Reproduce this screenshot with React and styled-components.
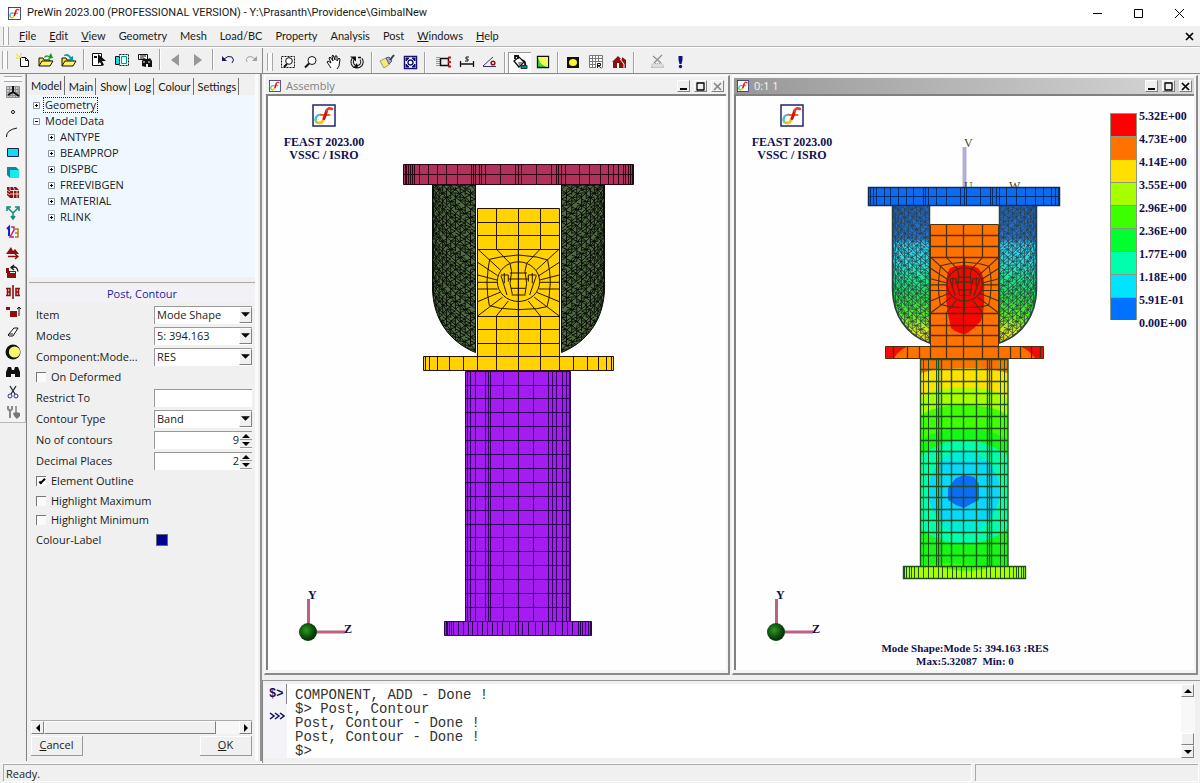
import React from "react";
import styled, { createGlobalStyle, css } from "styled-components";

const Global = createGlobalStyle`
  *, *::before, *::after { box-sizing: border-box; }
  body { margin: 0; background: #f0f0f0; color: #1a1a1a; font: 11px/16px "Open Sans", "Noto Sans", sans-serif; }
  button, input, select { font: inherit; color: inherit; margin: 0; padding: 0; border: 0; border-radius: 0; background: none; }
  u { text-underline-offset: 1px; }
`;

const raised = css`
  background: #f0f0f0;
  border: 1px solid;
  border-color: #fff #808080 #808080 #fff;
`;

const chrome = css`font-family: Lato, "Open Sans", sans-serif; font-size: 11px;`;

/* ---------- frame ---------- */
const Page = styled.div`display: flex; flex-direction: column; min-height: 100vh;`;
const TitleBar = styled.header`
  display: flex; align-items: center; height: 26px; padding-left: 8px; gap: 6px; background: #fff;
`;
const AppTitle = styled.h1`margin: 0; flex: 1; font: 400 11px/16px Roboto, "Open Sans", sans-serif; white-space: nowrap;`;
const SysButtons = styled.span`display: flex;`;
const SysButton = styled.button`width: 41px; height: 26px; display: grid; place-items: center;`;
const MenuBar = styled.nav`
  display: flex; align-items: center; height: 21px; padding: 0 6px 0 3px;
  border-bottom: 1px solid #b4b4b4; background: #f0f0f0; ${chrome}
`;
const MenuItem = styled.button`padding: 0 6px 0 7px; white-space: nowrap;`;
const Fill = styled.span`flex: 1;`;
const Grip = styled.span`
  flex: none;
  width: ${(p) => (p.$flat ? "18px" : "6px")};
  height: ${(p) => (p.$flat ? "6px" : "18px")};
  border: solid #a8a8a8;
  border-width: ${(p) => (p.$flat ? "1px 0" : "0 1px")};
  background: #fafafa;
`;
const Toolbars = styled.div`
  display: flex; height: 27px; border-top: 1px solid #fff; border-bottom: 1px solid #8a8a8a;
`;
const Toolbar = styled.div`
  display: flex; align-items: center;
  flex: ${(p) => (p.$grow ? 1 : "none")};
  padding: ${(p) => (p.$grow ? "3px 0 0 4px" : "0 0 2px 2px")};
  border-left: ${(p) => (p.$grow ? "1px solid #8a8a8a" : "0")};
`;
const ToolButton = styled.button`
  flex: none; width: 23px; height: ${(p) => (p.$tall ? "20px" : "21px")};
  display: grid; place-items: center;
  ${(p) => p.$on && css`background: #fafafa; box-shadow: inset 1px 1px #999, inset -1px -1px #fff;`}
`;
const Sep = styled.span`
  flex: none; width: 7px; height: 21px; margin-right: ${(p) => p.$after || 0}px;
  &::before { content: ""; display: block; width: 2px; height: 100%; margin-left: 3px; border-left: 1px solid #a0a0a0; background: #fff; }
`;
const Pad = styled.span`flex: none; width: 3px;`;

const Work = styled.div`flex: 1; display: flex;`;
const Rail = styled.div`
  align-self: flex-start; width: 26px; padding: 2px 0 0 1px;
  display: flex; flex-direction: column; align-items: center;
  border-right: 1px solid #b8b8b8; border-bottom: 1px solid #b8b8b8; background: #f3f3f3;
`;

/* ---------- side panel ---------- */
const Side = styled.aside`
  width: 236px; flex: none; display: flex; flex-direction: column;
  border-left: 1px solid #808080; border-right: 2px solid #909090; margin-bottom: 2px;
`;
const SideInner = styled.div`
  flex: 1; display: flex; flex-direction: column; border-right: 3px solid #fbfbfb; padding: 0 0 5px 2px; margin-right: 2px;
`;
const Tabs = styled.div`display: flex; align-items: flex-end; height: 21px; padding-top: 2px; ${chrome}`;
const Tab = styled.button`
  height: ${(p) => (p.$active ? "19px" : "17px")};
  padding: 0 2px 0 ${(p) => (p.$active ? "2px" : "4px")};
  border-right: 1px solid #707070;
`;
const Tree = styled.ul`
  margin: 0; padding: 2px 0 0 3px; height: 182px; list-style: none; background: #f0f8ff;
`;
const Node = styled.li`
  display: flex; align-items: center; gap: 4px; height: 16px; padding-left: ${(p) => (p.$depth ? 16 : 1)}px;
`;
const Label = styled.span`
  padding: 0 1px; line-height: 14px; outline: ${(p) => (p.$focus ? "1px dotted #222" : "0")};
`;
const Expander = styled.button`width: 7px; height: 7px; display: grid;`;
const Form = styled.form`
  margin-top: 5px; border-top: 1px solid #a8a8a8; flex: 1; display: flex; flex-direction: column;
`;
const FormTitle = styled.h2`
  margin: 3px 0 2px; background: #f1f1f6; color: #1c1ca8; font-size: 11px; line-height: 16px; font-weight: 400; text-align: center;
`;
const Row = styled.div`
  display: grid; grid-template-columns: 118px 98px; align-items: center; height: 21px; padding-left: 7px; white-space: nowrap;
`;
const CheckRow = styled.label`
  display: flex; align-items: center; gap: 5px; height: ${(p) => (p.$tight ? 19 : 20)}px; padding-left: 7px;
`;
const Check = styled.input`
  appearance: none; width: 10px; height: 10px; background: #fafafa;
  border: solid #777; border-width: 1px 0 0 1px; display: grid; place-items: center;
  &:checked::before { content: ""; width: 7px; height: 3px; border: solid #000; border-width: 0 0 2px 2px; transform: rotate(-45deg) translate(1px, 0); }
`;
const Field = styled.span`
  display: grid; height: 18px; background: #fff; border: solid #999; border-width: 1px 0 0 1px;
  > * { grid-area: 1 / 1; min-width: 0; }
`;
const Select = styled.select`appearance: none; padding-left: 2px; width: 100%; height: 16px; outline: 0;`;
const Text = styled.input`
  width: 100%; height: 16px; outline: 0; text-align: right; padding-right: 13px;
`;
const Arrow = styled.span`
  justify-self: end; width: 13px; height: 16px; display: grid; place-items: center; pointer-events: none; ${raised}
`;
const Spin = styled.span`justify-self: end; display: grid; width: 12px;`;
const SpinButton = styled.button`height: 8px; display: grid; place-items: center; background: #f0f0f0; border-bottom: 1px solid #999;`;
const Swatch = styled.input`
  appearance: none; width: 12px; height: 12px; margin-left: 2px; border: 1px solid #667;
  &::-webkit-color-swatch-wrapper { padding: 0; }
  &::-webkit-color-swatch { border: 0; }
`;
const HScroll = styled.div`display: flex; height: 14px; margin: 0 3px 0 2px; border-top: 1px solid #aaa; background: #f7f7f7;`;
const ScrollButton = styled.button`width: 13px; height: 13px; flex: none; display: grid; place-items: center; ${raised}`;
const HThumb = styled.span`width: 172px; ${raised}`;
const Actions = styled.div`display: flex; justify-content: space-between; margin: 2px 3px 0 2px;`;
const Push = styled.button`width: 52px; height: 20px; padding-bottom: 2px; border: solid #999; border-width: 0 1px 1px 0; box-shadow: inset 1px 1px #fff;`;

/* ---------- documents ---------- */
const Main = styled.main`flex: 1; min-width: 0; display: flex; flex-direction: column;`;
const Mdi = styled.section`flex: 1; display: flex; gap: 2px; padding: 1px 2px 0;`;
const Win = styled.article`
  flex: 1; min-width: 0; display: flex; flex-direction: column; padding: 2px 2px 3px 1px;
  border: solid; border-width: 1px 2px 2px 1px; border-color: #fff #8a8a8a #8a8a8a #fff; background: #f4f4f4;
`;
const WinTitle = styled.header`
  display: flex; align-items: center; gap: 5px; height: 16px; padding: 0 2px 0 3px;
  color: ${(p) => (p.$active ? "#f4f4f4" : "#808080")};
  background: ${(p) => (p.$active ? "linear-gradient(90deg, #989898, #d6d6d6)" : "#f0f0f0")};
`;
const WinName = styled.h3`margin: 0; flex: 1; font-size: 11px; line-height: 16px; font-weight: 400;`;
const WinButtons = styled.span`display: flex; gap: 4px;`;
const WinButton = styled.button`width: 13px; height: 12px; display: grid; place-items: center; ${raised}`;
const Viewport = styled.div`
  position: relative; flex: 1; min-height: 574px; background: #fefefe; border: solid #808080; border-width: 2px 0 0 2px;
  color: #10104e; font: bold 12px/13px "Liberation Serif", serif; text-align: center;
`;
const Scene = styled.svg`position: absolute; inset: 0; width: 100%; height: 100%;`;
const Brand = styled.div`position: absolute; left: 0; top: 8px; width: 112px;`;
const BrandText = styled.p`margin: 6px 0 0;`;
const Caption = styled.p`position: absolute; left: 0; right: 0; bottom: 2px; margin: 0; white-space: pre; font-size: 11px;`;
const Legend = styled.ol`
  position: absolute; top: 14px; right: 6px; width: 78px; margin: 0; padding: 0; list-style: none; text-align: left;
`;
const Step = styled.li`
  display: flex; gap: 2px; height: 23px;
  &::before { content: ""; width: 27px; height: 23px; margin-top: 3px; background: ${(p) => p.$c}; border: 1px solid ${(p) => (p.$c === "none" ? "transparent" : "#8a9a80")}; border-bottom: 0; }
`;

/* ---------- console and status ---------- */
const Console = styled.section`
  display: flex; height: 83px; margin-top: 5px; padding: 3px 5px 5px 1px;
  border: solid #999; border-width: 1px 0 0 1px; border-left-color: #888;
`;
const Gutter = styled.div`
  width: 23px; padding-left: 5px; color: #101058; font: bold 12px/20px "Liberation Mono", monospace; background: #f3f3f8;
`;
const Prompt = styled.span`display: block; border-right: 1px solid #808090; height: 20px;`;
const More = styled.span`display: flex; align-items: center; height: 24px;`;
const Output = styled.pre`
  flex: 1; margin: 0; padding: 4px 8px 0; background: #fff; color: #333; font: 14px/14px "Liberation Mono", monospace;
`;
const VScroll = styled.div`width: 14px; display: flex; flex-direction: column; background: #f8f8f8;`;
const VThumb = styled.span`height: 12px; margin-right: 1px; ${raised}`;
const Status = styled.footer`
  display: flex; gap: 4px; height: 20px; padding: 0 2px 2px 3px; border-top: 1px solid #fafafa;
`;
const Cell = styled.span`
  ${(p) => (p.$w ? `width: ${p.$w}px;` : "flex: 1;")}
  padding-left: 2px; border: solid #aaa; border-width: 1px 0 0 1px; line-height: 17px; box-shadow: 1px 1px #fff;
`;

/* ---------- drawings ---------- */
const Tri = ({ d = "down", w = 8 }) => (
  <svg width={w} height={w} viewBox="0 0 8 8">
    <path d={{ down: "M0 2h8L4 6z", up: "M0 6h8L4 2z", left: "M6 0v8L2 4z", right: "M2 0v8l4-4z" }[d]} />
  </svg>
);

const LogoArt = styled.svg`flex: none;`;
function Logo({ w, h }) {
  return (
    <LogoArt width={w} height={h} viewBox="0 0 24 23" preserveAspectRatio="none">
      <rect x="1" y="1" width="22" height="21" fill="#fff" stroke="#23236e" strokeWidth="1.500" />
      <g fill="none" strokeLinecap="round" strokeWidth="3">
        <path d="M3.500 16q0-5 5-5.500" stroke="#38b8f0" strokeWidth="2.200" />
        <path d="M7.500 18.800q-4 .500-4-3" stroke="#70d840" strokeWidth="2.200" />
        <path d="M11.500 15q-1 3.500-4 4" stroke="#f5c820" />
        <path d="M9 11h8.500" stroke="#f06a10" strokeWidth="2" />
        <path d="M14.500 7q-1 4-2.500 7.500" stroke="#d01010" />
        <path d="M20 5q-4-2-5.500 2" stroke="#f03a20" strokeWidth="2.600" />
      </g>
    </LogoArt>
  );
}

const K = "#111";
const R = "#8c1010";
const ICONS = {
  new: <><path d="M5.500 5.500h5l3 3v6h-8z" fill="#fff" stroke={K} /><path d="M10.500 5.500v3h3" fill="none" stroke={K} /><path d="M1 2l5 4M6 1v5M1 6h4" stroke="#e8e020" /></>,
  open: <><path d="M1 14V6h4l1 2h6v2" fill="#f0e840" stroke={K} /><path d="M1 14l3-5h11l-3 5z" fill="#fbf264" stroke={K} /><path d="M6 5q2-3 5-1l2-3 2 5-5 1 1-2q-3-1-4 1z" fill="#159a20" /></>,
  save: <><path d="M1 14V6h4l1 2h6v2" fill="#f0e840" stroke={K} /><path d="M1 14l3-5h11l-3 5z" fill="#fbf264" stroke={K} /><path d="M3 3q4-3 7 2l2-1v5L7 8l2-1Q7 3 3 4z" fill="#089aa0" /></>,
  pick: <><path d="M1.500 1.500h9v12h-9z" fill="#fff" stroke={K} /><path d="M3 4h3v2H3z" fill={K} /><path d="M7 2v10l2-2 2 4 2-1-2-4h4z" fill={K} /></>,
  boxsel: <><path d="M1.500 4.500h4v8h-4z" fill="#20d8e8" stroke={K} /><path d="M5.500 2.500h9v11h-9z" fill="#e8ffff" stroke={K} strokeDasharray="2 1" /><path d="M7.500 4.500h5v7h-5z" fill="none" stroke="#098" /></>,
  bino: <><path d="M1.500 2.500h9v5h-9z" fill="#fff" stroke={K} /><path d="M3 4h6M3 6h4" stroke={K} /><path d="M5 14V9l2-3 2 1h2l2-1 2 3v6h-4v-3h-2v3z" fill={K} /><path d="M7 9v2M12 9v2" stroke="#fff" /></>,
  left: <path d="M12 2v12L4 8z" fill="#989898" />,
  right: <path d="M4 2v12l8-6z" fill="#989898" />,
  undo: <><path d="M4 7q4-4 8-2 3 3 0 6" fill="none" stroke="#151560" /><path d="M2 4v5h5z" fill="#151560" /></>,
  redo: <><path d="M12 7Q8 3 5 5q-3 2-1 5" fill="none" stroke="#a0a0a0" /><path d="M14 4v5H9z" fill="#a0a0a0" /></>,
  zoomwin: <><path d="M1.500 2.500h13v11h-13z" fill="none" stroke={K} strokeDasharray="2 1" /><circle cx="9" cy="7" r="3.300" fill="#fff" stroke={K} /><path d="M7 10l-3 3" stroke={K} strokeWidth="2" /></>,
  zoom: <><circle cx="9" cy="6.500" r="4" fill="#fff" stroke={K} /><path d="M6 9.500l-4 4" stroke={K} strokeWidth="2" /></>,
  hand: <path d="M5 14L1 8l1-1 3 2L3 4l1-1 3 4L6 2l1-1 2 5V2l2 0 0 5 2-3 1 1-1 7-2 3" fill="#fff" stroke={K} />,
  rotate: <><path d="M4 5Q2 9 5 12q4 2 7-1 2-3 0-6" fill="none" stroke={K} strokeWidth="3.400" /><path d="M4 5Q2 9 5 12q4 2 7-1 2-3 0-6" fill="none" stroke="#e4e4e4" strokeWidth="1.400" /><path d="M1 2.500h6v5zM9 14h-5l4-5z" fill={K} /><path d="M9 3.500h3" stroke={K} strokeWidth="1.500" /></>,
  brush: <><path d="M1 7l6-3 4 6-6 4z" fill="#f4ec70" stroke="#998" /><path d="M7 4l3-1 3 4-3 3z" fill="#aaa8d8" stroke="#557" /><path d="M11 6l4-5" stroke="#335" strokeWidth="2" /></>,
  fit: <><path d="M2.500 2.500h12v12h-12z" fill="#fff" stroke="#151570" strokeWidth="1.500" /><path d="M4 4h3L4 7zM13 4v3l-3-3zM4 13v-3l3 3zM13 13h-3l3-3z" fill="#151570" stroke="#151570" /><circle cx="8.500" cy="8.500" r="2.500" fill="#fff" stroke="#151570" strokeWidth="1.400" /></>,
  load: <><path d="M4.500 4.500h8v7h-8z" fill="#eee" stroke={K} strokeWidth="1.500" /><path d="M1 3v10M3 3v10" stroke="#3434a0" strokeDasharray="1 1" /><path d="M12 3.500h3M12 8h3M12 12.500h3" stroke="#d01010" strokeWidth="2" /></>,
  dim: <><path d="M1.500 7v6M14.500 7v6M2 10h12" stroke={K} strokeWidth="1.300" /><path d="M10 3H7v2h2v2H6" stroke={K} fill="none" /></>,
  angle: <><path d="M1 12L11 3M1 12.500h13" stroke="#337" fill="none" /><circle cx="11" cy="9" r="2.600" fill={R} /><circle cx="11" cy="9" r="1" fill="#fff" /></>,
  paint: <><path d="M2 7l5-4 5 5-5 5z" fill="#fff" stroke={K} strokeWidth="1.300" /><path d="M3 5V2h3v3M10 6q4 1 3 6" stroke={K} fill="none" strokeWidth="1.800" /><path d="M6 8h5l-4 4z" fill="#888" /><path d="M9 11.500h6v3H9z" fill="#0a8a70" stroke="#134" /></>,
  shade: <><path d="M2.500 2.500h11v11h-11z" fill="#38e030" stroke={K} strokeWidth="1.300" /><path d="M3 3h10v10Q5 12 3 3z" fill="#f4f860" /></>,
  dot: <><path d="M2 3h12v11H2z" fill={K} /><ellipse cx="8" cy="8.500" rx="4" ry="3.500" fill="#f6f630" /></>,
  grid: <><path d="M1.500 1.500h13v12h-13zM1 4.500h14M1 7.500h14M1 10.500h14M4.500 1v13M7.500 1v13M10.500 1v13" fill="#fff" stroke="#777" /><path d="M8 8h6v6H8z" fill="#fff" /><path d="M9.500 14V9.500h3v2h-3l4 2.500" stroke={K} fill="none" /></>,
  home: <><path d="M1 8l6-6 4 4V3l4 3v8H2V8z" fill={R} /><path d="M6 9h2v5H6z" fill="#fff" /><path d="M9 5l4 5v4" stroke="#fff" fill="none" /></>,
  cut2: <><path d="M4 2l8 7M13 1L5 9" stroke="#909090" strokeWidth="1.300" /><path d="M2.500 13.500q0-4 3-4h6q3 0 3 4z" fill="#ddd" stroke="#a0a0a0" strokeDasharray="1 1" /></>,
  bang: <><path d="M6.500 2h4v4l-1 4h-2l-1-4z" fill="#101080" /><circle cx="8.500" cy="12.500" r="1.700" fill="#101080" /></>,
  wp: <><path d="M1.500 2.500h13v11h-13zM1 5.500h14M1 8.500h14M1 11.500h14M4.500 2v12M7.500 2v12M10.500 2v12M13 2v12" fill="#ccc" stroke="#8c8c94" /><path d="M8 2v6l6 4M8 8l-5 3" stroke={K} fill="none" strokeWidth="2" /></>,
  point: <circle cx="8" cy="8" r="1.500" fill="#fff" stroke={K} />,
  curve: <path d="M1.500 13Q1 6 12 4" fill="none" stroke={K} />,
  surf: <path d="M2.500 4.500h11v8h-11z" fill="#12dcf4" stroke="#225" />,
  solid: <><path d="M2 3h9l3 3v8H5L2 11z" fill="#0a8a98" /><path d="M5 6h9v8H5z" fill="#18e8f0" /></>,
  mesh: <><path d="M2 3h9l3 3v8H5L2 11z" fill={R} /><path d="M5 6.500h10M5 10h10M8.500 6v8M12 6v8M2 6l3 2M2 9l3 2M5 3v3M8 3l2 3" stroke="#fff" strokeWidth=".8" /></>,
  coord: <path d="M8 14V9L3 4M8 9l5-5M2 7V3h4M10 3h4v4M6 12l2 3 2-3" fill="none" stroke="#118a78" strokeWidth="1.500" />,
  nums: <><path d="M2 5l2-2v9" fill="none" stroke="#2020c0" strokeWidth="2" /><path d="M6 3h3v3L5 13h4" fill="none" stroke="#c020a0" strokeWidth="1.500" /><path d="M9 5h4v8h-3M10 9h3" fill="none" stroke="#b08010" strokeWidth="1.500" /></>,
  move: <><path d="M1 10l5-7 2 4 2-2 4 5z" fill={R} /><path d="M3 12.500h9M10 10l3 2.500L10 15" stroke={R} fill="none" strokeWidth="1.300" /></>,
  turn: <><path d="M1 4h3v3h7v7H2V9H1z" fill={R} /><path d="M5 8h5v1H5z" fill="#f3f3f3" /><path d="M7 3.500q5-2 6 4M9 1L6 3.500 9 6" fill="none" stroke={K} strokeWidth="1.300" /></>,
  mirror: <path d="M2.500 4v8M1 4.500h4v3.500H3h2v3.500H1M8 1v14M13.500 4v8M15 4.500h-4v3.500h2h-2v3.500h4" fill="none" stroke={R} strokeWidth="1.600" />,
  scale: <><path d="M1 3h4v3H1zM5 7h7v6H5z" fill={R} /><path d="M14 12V3M12 5l2-2 2 2" stroke={K} fill="none" /></>,
  erase: <path d="M3 11l6-7h4l-5 8H4zM4 10h4" fill="#fff" stroke={K} />,
  moon: <><circle cx="8" cy="8" r="7.500" fill={K} /><circle cx="9.500" cy="8" r="5.600" fill="#f8f870" /></>,
  binos: <path d="M1 13V8l2-5h3l1 3h2l1-3h3l2 5v5h-5v-3H6v3z" fill={K} />,
  cut: <><path d="M5 2l5 8M11 2L6 10" stroke="#223" strokeWidth="1.300" /><circle cx="5" cy="12" r="2" fill="none" stroke="#2a2a90" /><circle cx="11" cy="12" r="2" fill="none" stroke="#2a2a90" /></>,
  tools: <><path d="M3 2v3l2 2 2-2V2M5 7v7" stroke="#888" strokeWidth="2" fill="none" /><path d="M11 2v6" stroke="#888" strokeWidth="1.600" /><path d="M8 9l3-1 4 1v3l-3 3-3-3z" fill="#777" /></>,
};
const Icon = ({ n }) => <svg width="16" height="16" viewBox="0 0 16 16" aria-hidden="true">{ICONS[n]}</svg>;
const Tools = ({ names, on, tall }) =>
  names.map((n) => <ToolButton key={n} type="button" aria-label={n} $on={n === on} $tall={tall}><Icon n={n} /></ToolButton>);

/* Grid lines are snapped to pixel centres so that they stay crisp. */
const snap = (v) => Math.floor(v) + 0.5;
const vLines = (xs, y1, y2) => xs.map((x) => `M${snap(x)} ${y1}V${y2}`).join("");
const hLines = (ys, x1, x2) => ys.map((y) => `M${x1} ${snap(y)}H${x2}`).join("");

/* Triangle mesh whose columns get narrower towards the outer wall. */
function triMesh(outer, inner, top, bottom, step) {
  const n = 11;
  const xs = Array.from({ length: n + 1 }, (_, i) => outer + (inner - outer) * Math.pow(i / n, 1.4));
  let d = "";
  const rows = Math.ceil((bottom - top) / step);
  for (let r = 0; r < rows; r += 1) {
    const y = top + r * step;
    for (let i = 0; i < n; i += 1) {
      const flip = (r + i) % 2 === 0;
      const wob = ((r * 7 + i * 5) % 4) * 0.7;
      const next = ((r * 7 + 7 + i * 5) % 4) * 0.7;
      const a = xs[i].toFixed(1);
      const b = xs[i + 1].toFixed(1);
      d += `M${a} ${flip ? y : y + step}L${b} ${(flip ? y + step : y) + wob}`;
      if ((r * 3 + i) % 5 !== 0) d += `M${a} ${y + wob}V${y + step + next}`;
      if ((r + i * 2) % 3 !== 0) d += `M${a} ${y}L${b} ${y + wob}`;
    }
  }
  return d;
}

const hub =
  "M248 282L316 345M248 322L308 362M248 360L306 375M248 402H308M248 440L315 412M248 483L322 427" +
  "M493 282L424 345M493 322L432 362M493 360L434 375M493 402H432M493 440L425 412M493 483L418 427" +
  "M304 282L345 325M436 282L395 325M304 483L340 438M436 483L400 438M248 382H306M434 382H493" +
  "M284 313L316 306L370 300L425 306L458 315L464 350L466 382L462 430L456 455L425 461L370 464L316 460L283 452L278 420L276 382L279 345Z" +
  "M307 380A63 59 0 1 0 434 380A63 59 0 1 0 307 380M370 282V483M345 354H396M340 372H402M348 400H392M350 420H392" +
  "M345 325L350 350L345 385L352 418M395 325L390 350L395 385L390 418M318 360H340V380M400 380V360H424M318 362L336 420M424 362L404 420M328 354V385M412 354V385";

function Triad({ x }) {
  return (
    <g fontFamily="Liberation Serif, serif" fontWeight="bold" fontSize="12" fill="#10104e">
      <path d={`M${x + 0.5} 632V599M${x} 632h37`} stroke="#c06080" strokeWidth="3" fill="none" />
      <circle cx={x} cy="632" r="9" fill="url(#ball)" />
      <text x={x} y="599">Y</text>
      <text x={x + 36} y="633">Z</text>
    </g>
  );
}

function AssemblyScene() {
  const px = (a) => a.map((v) => 395 + v / 3);
  const col = [467.5, 470.5, 475.5, 485.5, 488, 490, 503.5, 518.5, 533.5, 548, 552.5, 556.5, 562, 566, 569];
  const base = [552, 557, 563, 568, 575, 590, 605, 620, 632, 645, 660, 675, 690, 705, 722, 742, 760, 768, 780, 800, 820, 840, 860, 880, 900, 915, 930, 948, 955, 962, 970, 978, 985];
  const lh = "M432.500 185V288C433 320 450 342 475.500 352.500V185Z";
  const rh = "M604.500 185V288C604 320 587 342 561.500 352.500V185Z";
  return (
    <Scene viewBox="268 96 458 574" aria-label="Assembly model">
      <defs>
        <clipPath id="la"><path d={lh} /></clipPath>
        <clipPath id="ra"><path d={rh} /></clipPath>
        <radialGradient id="ball" cx=".4" cy=".4"><stop offset="0" stopColor="#2a9a20" /><stop offset="1" stopColor="#053a08" /></radialGradient>
      </defs>
      <g stroke="#0a0f08" strokeWidth="1" fill="#506a44">
        <path d={lh} /><path d={rh} />
        <g fill="none" strokeWidth="1">
          <path clipPath="url(#la)" d={triMesh(432, 476, 185, 354, 4)} />
          <path clipPath="url(#ra)" d={triMesh(605, 561, 185, 354, 4)} />
        </g>
      </g>
      <g stroke="#2a0614">
        <path d="M403.500 164.500h230v20h-230z" fill="#b2305c" />
        <path d={"M403 174.500h230" + vLines(px([30, 34, 40, 46, 52, 58, 74, 100, 128, 155, 187, 228, 234, 242, 254, 260, 272, 316, 362, 370, 378, 425, 470, 484, 490, 500, 510, 553, 583, 615, 640, 655, 670, 685, 690, 700, 705, 712]), 164, 185)} />
      </g>
      <g stroke="#2a1200">
        <path d="M477.500 208.500h82v148h-82z" fill="#ffd200" />
        <path d="M423.500 356.500h190v14h-190z" fill="#ffd200" />
        <path fill="none" d={vLines([496.5, 540.5], 208, 249) + vLines([496.5, 540.5], 316, 371) + vLines([518.5], 208, 371) + hLines([222.5, 235.5, 249.5, 316.5, 329.5, 343.5], 477, 560) + vLines(px([90, 103, 127, 163, 204, 248, 493, 534, 577, 610, 635, 648]), 356, 371)} />
        <path d={hub} transform="translate(395 155) scale(.3333)" strokeWidth="3" fill="none" />
      </g>
      <g stroke="#2c0558">
        <path d="M465.500 371.500h105v250h-105zM444.500 621.500h147v14h-147z" fill="#a41cf0" />
        <path d={vLines(col, 371, 622) + hLines(Array.from({ length: 17 }, (_, i) => 385 + i * 13.9), 465, 571) + vLines(base.map((v) => 262 + v / 3), 622, 636)} />
      </g>
      <Triad x={308} />
    </Scene>
  );
}

function ContourScene() {
  const px = (a) => a.map((v) => 860 + v / 3);
  const py = (a) => a.map((v) => 340 + v / 3);
  const lh = "M892.500 205V290C893 315 906 335 929.500 343V205Z";
  const rh = "M1036.500 205V290C1036 315 1023 335 999.500 343V205Z";
  return (
    <Scene viewBox="736 96 458 574" aria-label="Mode shape contour">
      <defs>
        <clipPath id="lb"><path d={lh} /></clipPath>
        <clipPath id="rb"><path d={rh} /></clipPath>
        <clipPath id="cb"><path d="M920.500 359h87.500v208h-87.500z" /></clipPath>
        <linearGradient id="band" x1="0" x2="0" y1="0" y2="1">
          <stop offset="0" stopColor="#2462b8" /><stop offset=".24" stopColor="#2870c8" />
          <stop offset=".28" stopColor="#30c8f0" /><stop offset=".42" stopColor="#30d8d8" />
          <stop offset=".5" stopColor="#20e8a0" /><stop offset=".64" stopColor="#20d850" />
          <stop offset=".8" stopColor="#58e820" /><stop offset=".92" stopColor="#e0e820" /><stop offset="1" stopColor="#e0c020" />
        </linearGradient>
      </defs>
      <path d="M964.500 147v40" stroke="#b4acd8" strokeWidth="4" />
      <g fontFamily="Liberation Serif, serif" fontSize="12" fontWeight="400" fill="#4c4410">
        <text x="964" y="147">V</text><text x="964" y="190">U</text><text x="1009" y="190">W</text>
      </g>
      <g stroke="#2c4048" strokeWidth="1.500" fill="url(#band)">
        <path d={lh} /><path d={rh} />
        <g fill="none" strokeWidth=".8">
          <path clipPath="url(#lb)" d={triMesh(892, 930, 205, 345, 4)} />
          <path clipPath="url(#rb)" d={triMesh(1037, 999, 205, 345, 4)} />
        </g>
      </g>
      <g stroke="#0c2c66">
        <path d="M868.500 187.500h191v18h-191z" fill="#0a6cf4" strokeWidth="1.500" />
        <path d={"M868 196.500h191" + vLines(px([30, 40, 48, 72, 92, 115, 138, 160, 190, 195, 205, 230, 260, 300, 312, 318, 360, 390, 398, 410, 418, 440, 468, 495, 525, 550, 575, 585, 595]), 187, 206)} />
      </g>
      <g stroke="#4a3010">
        <path d="M930.500 224.500h68v122h-68zM885.500 346.500h158v12h-158z" fill="#ff7200" />
        <path d="M886 347h21q-8 3-13 11h-8zM1043 347h-22q8 3 14 11h8z" fill="#fb0808" stroke="none" />
        <path d="M950 268q14-6 28 0 8 8 6 25 1 15-3 28-7 8-15 13-8 0-15-6-5-20-5-35-1-17 4-25z" fill="#fa0404" stroke="none" />
        <path fill="none" strokeWidth="1.300" d={vLines([946.5, 982.5], 224, 257) + vLines([946.5, 982.5], 313, 359) + vLines([963.5], 224, 359) + hLines([235.5, 246.5, 257.5, 313.5, 325.5, 335.5, 346.5], 930, 999) + vLines(px([100, 143, 178, 210, 416, 450, 480, 515, 540]), 346, 359)} />
        <path d={hub} transform="translate(861.500 178.500) scale(.2785)" strokeWidth="4" fill="none" />
      </g>
      <g clipPath="url(#cb)">
        <path d="M920 359h89v208h-89z" fill="#ff7200" />
        <path d="M920 374q12-6 44-6t45 6v193h-89z" fill="#ffe000" />
        <path d="M920 400q8-12 44-13 36 1 45 13v167h-89z" fill="#a8ff00" />
        <path d="M920 416q14-11 44-11t45 11v151h-89z" fill="#3cff00" />
        <path d="M920 440q20-12 44-12t45 12v127h-89z" fill="#14f814" />
        <path d="M920 456q22-16 44-16t45 16v72q-20 16-45 16t-44-16z" fill="#00ffac" />
        <ellipse cx="964" cy="492" rx="35" ry="42" fill="#00ecdc" />
        <path d="M942 461h44q14 14 14 30t-14 30h-44q-14-14-14-30t14-30z" fill="#08d8fc" />
        <path d="M920 567q20-6 44-3t45 3z" fill="#3cff00" />
      </g>
      <path d="M903.500 566.500h122v12h-122z" fill="#a8ff00" />
      <path d="M940 567h50q-20 8-50 0z" fill="#3cff00" />
      <path d="M956 478l8-3 10 2 5 7v16l-8 4-7 4-8-3-8-5 0-12z" fill="#0a6cf8" />
      <g stroke="#20501c" fill="none">
        <path strokeWidth="1.400" d={"M920.500 359.500h87.500v207h-87.500zM903.500 566.500h122v12h-122z" + vLines(px([234, 245, 275, 311, 349, 381, 395]), 359, 567) + hLines(py([88, 125, 160, 193, 229, 265, 300, 333, 369, 402, 438, 472, 508, 542, 577, 610, 645]), 920, 1008)} />
        <path d={vLines(px([190, 205, 229, 388, 420, 433]), 359, 567)} />
        <path d={vLines(px([134, 140, 148, 155, 162, 175, 190, 205, 220, 234, 248, 262, 276, 290, 305, 320, 335, 350, 364, 378, 392, 406, 420, 434, 448, 460, 468, 476, 484, 490]), 566, 579)} />
      </g>
      <Triad x={776} />
    </Scene>
  );
}

const Glyph = ({ k, c = "#000" }) => (
  <svg width="9" height="9" viewBox="0 0 9 9" stroke={c} fill="none" strokeWidth="2">
    {k === "min" && <path d="M1 7h7" />}
    {k === "max" && <path d="M.500 1h8M1 1v7M8 1v7M.500 8h8" strokeWidth="1.300" />}
    {k === "close" && <path d="M1 1l7 7M8 1L1 8" strokeWidth="1.700" />}
  </svg>
);

function DocWindow({ name, active, children }) {
  return (
    <Win>
      <WinTitle $active={active}>
        <Logo w={12} h={12} />
        <WinName>{name}</WinName>
        <WinButtons>
          {["min", "max", "close"].map((k) => (
            <WinButton key={k} type="button" aria-label={k}><Glyph k={k} c={k === "close" && !active ? "#888" : "#000"} /></WinButton>
          ))}
        </WinButtons>
      </WinTitle>
      <Viewport>
        {children}
        <Brand><Logo w={24} h={23} /><BrandText>FEAST 2023.00<br />VSSC / ISRO</BrandText></Brand>
      </Viewport>
    </Win>
  );
}

const legend = [
  ["5.32E+00", "#fe0000"], ["4.73E+00", "#ff7200"], ["4.14E+00", "#ffe000"], ["3.55E+00", "#a8ff00"], ["2.96E+00", "#3cff00"],
  ["2.36E+00", "#00fe30"], ["1.77E+00", "#00ffac"], ["1.18E+00", "#00e4ff"], ["5.91E-01", "#0072ff"], ["0.00E+00", "none"],
];

const menus = [["F", "ile"], ["E", "dit"], ["V", "iew"], ["", "Geometry"], ["", "Mesh"], ["", "Load/BC"], ["", "Property"], ["", "Analysis"], ["", "Post"], ["W", "indows"], ["H", "elp"]];

function TreeNode({ label, depth, open, focus }) {
  return (
    <Node $depth={depth}>
      <Expander type="button" aria-label={`Toggle ${label}`}>
        <svg width="7" height="7" viewBox="0 0 7 7"><path d="M.500 .500h6v6h-6z" fill="#fff" stroke="#8894a0" /><path d={open ? "M2 3.500h3" : "M2 3.500h3M3.500 2v3"} stroke="#000" /></svg>
      </Expander>
      <Label $focus={focus}>{label}</Label>
    </Node>
  );
}

const Combo = ({ id, label, value }) => (
  <Row>
    <label htmlFor={id}>{label}</label>
    <Field><Select id={id} defaultValue={value}><option>{value}</option></Select><Arrow><Tri w={9} /></Arrow></Field>
  </Row>
);
const Spinner = ({ id, label, value }) => (
  <Row>
    <label htmlFor={id}>{label}</label>
    <Field>
      <Text id={id} defaultValue={value} />
      <Spin>
        <SpinButton type="button" aria-label="Increase"><Tri d="up" /></SpinButton>
        <SpinButton type="button" aria-label="Decrease"><Tri /></SpinButton>
      </Spin>
    </Field>
  </Row>
);

export default function App() {
  return (
    <Page>
      <Global />
      <TitleBar>
        <Logo w={13} h={13} />
        <AppTitle>PreWin 2023.00 (PROFESSIONAL VERSION) - Y:\Prasanth\Providence\GimbalNew</AppTitle>
        <SysButtons>
          <SysButton aria-label="Minimise"><svg width="11" height="11"><path d="M1 5.500h9" stroke="#000" /></svg></SysButton>
          <SysButton aria-label="Maximise"><svg width="11" height="11"><path d="M1.500 1.500h8v8h-8z" stroke="#000" fill="none" /></svg></SysButton>
          <SysButton aria-label="Close"><svg width="11" height="11"><path d="M1 1l9 9M10 1l-9 9" stroke="#000" /></svg></SysButton>
        </SysButtons>
      </TitleBar>
      <MenuBar>
        <Grip />
        <Pad />
        {menus.map(([u, t]) => <MenuItem key={t} type="button">{u && <u>{u}</u>}{t}</MenuItem>)}
        <Fill />
        <Glyph k="close" />
      </MenuBar>
      <Toolbars>
        <Toolbar>
          <Grip /><Pad />
          <Tools names={["new", "open", "save"]} /><Sep />
          <Tools names={["pick", "boxsel", "bino"]} /><Sep />
          <Tools names={["left", "right"]} /><Sep />
          <Tools names={["undo", "redo"]} />
        </Toolbar>
        <Toolbar $grow>
          <Grip /><Pad />
          <Tools names={["zoomwin", "zoom", "hand", "rotate"]} /><Sep />
          <Tools names={["brush", "fit"]} /><Sep $after={4} />
          <Tools names={["load", "dim", "angle"]} /><Sep />
          <Tools names={["paint", "shade"]} on="paint" /><Sep />
          <Tools names={["dot", "grid", "home"]} /><Sep $after={8} />
          <Tools names={["cut2", "bang"]} />
        </Toolbar>
      </Toolbars>
      <Work>
        <Rail>
          <Grip $flat />
          <Tools tall names={["wp", "point", "curve", "surf", "solid", "mesh", "coord", "nums", "move", "turn", "mirror", "scale", "erase", "moon", "binos", "cut", "tools"]} />
        </Rail>
        <Side>
          <SideInner>
            <Tabs>
              {["Model", "Main", "Show", "Log", "Colour", "Settings"].map((t, i) => <Tab key={t} type="button" $active={i === 0}>{t}</Tab>)}
            </Tabs>
            <Tree>
              <TreeNode label="Geometry" focus />
              <TreeNode label="Model Data" open />
              {["ANTYPE", "BEAMPROP", "DISPBC", "FREEVIBGEN", "MATERIAL", "RLINK"].map((t) => <TreeNode key={t} label={t} depth={1} />)}
            </Tree>
            <Form onSubmit={(e) => e.preventDefault()}>
              <FormTitle>Post, Contour</FormTitle>
              <Combo id="item" label="Item" value="Mode Shape" />
              <Combo id="modes" label="Modes" value="5: 394.163" />
              <Combo id="comp" label="Component:Mode..." value="RES" />
              <CheckRow><Check type="checkbox" />On Deformed</CheckRow>
              <Row><label htmlFor="restrict">Restrict To</label><Field><Text id="restrict" /></Field></Row>
              <Combo id="ctype" label="Contour Type" value="Band" />
              <Spinner id="count" label="No of contours" value="9" />
              <Spinner id="places" label="Decimal Places" value="2" />
              <CheckRow><Check type="checkbox" defaultChecked />Element Outline</CheckRow>
              <CheckRow $tight><Check type="checkbox" />Highlight Maximum</CheckRow>
              <CheckRow $tight><Check type="checkbox" />Highlight Minimum</CheckRow>
              <Row><label htmlFor="tint">Colour-Label</label><Swatch id="tint" type="color" defaultValue="#000090" /></Row>
              <Fill />
              <HScroll>
                <ScrollButton type="button" aria-label="Scroll left"><Tri d="left" /></ScrollButton>
                <HThumb /><Fill />
                <ScrollButton type="button" aria-label="Scroll right"><Tri d="right" /></ScrollButton>
              </HScroll>
              <Actions><Push type="button"><u>C</u>ancel</Push><Push type="submit"><u>O</u>K</Push></Actions>
            </Form>
          </SideInner>
        </Side>
        <Main>
          <Mdi>
            <DocWindow name="Assembly"><AssemblyScene /></DocWindow>
            <DocWindow name="0:1 1" active>
              <ContourScene />
              <Legend>{legend.map(([t, c]) => <Step key={t} $c={c}>{t}</Step>)}</Legend>
              <Caption>{"Mode Shape:Mode 5: 394.163 :RES\nMax:5.32087  Min: 0"}</Caption>
            </DocWindow>
          </Mdi>
          <Console>
            <Gutter><Prompt>$&gt;</Prompt><More><svg width="16" height="8" fill="none" stroke="#101058" strokeWidth="1.500"><path d="M1 1l4 3-4 3M6 1l4 3-4 3M11 1l4 3-4 3" /></svg></More></Gutter>
            <Output>{"COMPONENT, ADD - Done !\n$> Post, Contour\nPost, Contour - Done !\nPost, Contour - Done !\n$>"}</Output>
            <VScroll>
              <ScrollButton type="button" aria-label="Scroll up"><Tri d="up" /></ScrollButton>
              <Fill /><VThumb />
              <ScrollButton type="button" aria-label="Scroll down"><Tri /></ScrollButton>
            </VScroll>
          </Console>
        </Main>
      </Work>
      <Status><Cell>Ready.</Cell><Cell $w={223} /></Status>
    </Page>
  );
}
